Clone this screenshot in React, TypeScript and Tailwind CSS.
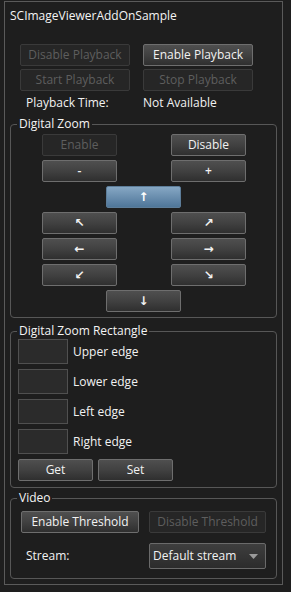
import React from "react"

const font = { fontFamily: '"Open Sans", "Liberation Sans", sans-serif' }

function Btn({
  children,
  w,
  disabled,
  blue,
  bold,
}: {
  children: React.ReactNode
  w: string
  disabled?: boolean
  blue?: boolean
  bold?: boolean
}) {
  let cls =
    "h-[22px] rounded-[2px] border flex items-center justify-center text-[12px] leading-none shrink-0 "
  if (disabled) cls += "border-[#3a3a3a] bg-[#262626] text-[#5e5e5e]"
  else if (blue)
    cls += "border-[#5d7d99] bg-gradient-to-b from-[#86a7c4] to-[#4f7699] text-white"
  else
    cls +=
      "border-[#6e6e6e] bg-gradient-to-b from-[#4f4f4f] via-[#414141] to-[#2f2f2f] text-[#f2f2f2]"
  return <div className={`${cls} ${w} ${bold ? "font-semibold" : ""}`}>{children}</div>
}

function Group({ title, children, className }: { title: string; children: React.ReactNode; className?: string }) {
  return (
    <fieldset
      className={`ml-[5px] w-[267px] rounded-[4px] border border-[#575757] ${className ?? ""}`}
    >
      <legend className="ml-[6px] px-[2px] text-[12px] leading-[16px] text-[#f4f4f4]">{title}</legend>
      {children}
    </fieldset>
  )
}

function Arrow({ c }: { c: string }) {
  return (
    <span className="text-[12px] font-bold leading-none" style={{ fontFamily: '"DejaVu Sans", sans-serif' }}>
      {c}
    </span>
  )
}

function EdgeRow({ label }: { label: string }) {
  return (
    <div className="flex items-center gap-[5px]">
      <div className="w-[50px] h-[25px] border border-[#505050] bg-[#2b2b2b]" />
      <span className="text-[12px] text-[#f2f2f2]">{label}</span>
    </div>
  )
}

export default function App() {
  return (
    <div className="w-[291px] h-[592px] bg-[#1e1e1e] pt-px pl-1" style={font}>
      <div className="w-[279px] h-[584px] border border-[#5a5a5a] flex flex-col">
        <div className="h-[28px] pl-[5px] flex items-center text-[12px] text-[#f4f4f4]">
          SCImageViewerAddOnSample
        </div>

        <div className="mt-[14px] ml-[15px] flex gap-[13px]">
          <Btn w="w-[110px]" disabled>Disable Playback</Btn>
          <Btn w="w-[110px]">Enable Playback</Btn>
        </div>
        <div className="mt-[3px] ml-[15px] flex gap-[13px]">
          <Btn w="w-[110px]" disabled>Start Playback</Btn>
          <Btn w="w-[110px]" disabled>Stop Playback</Btn>
        </div>
        <div className="mt-[2px] h-[20px] flex items-center text-[12px] text-[#f2f2f2]">
          <span className="ml-[21px] w-[117px]">Playback Time:</span>
          <span>Not Available</span>
        </div>

        <Group title="Digital Zoom" className="mt-[3px]">
          <div className="pt-[2px] pb-[5px] flex flex-col gap-[4px]">
            <div className="flex justify-between pl-[31px] pr-[30px]">
              <Btn w="w-[75px]" disabled>Enable</Btn>
              <Btn w="w-[75px]">Disable</Btn>
            </div>
            <div className="flex justify-between pl-[31px] pr-[30px]">
              <Btn w="w-[75px]" bold>-</Btn>
              <Btn w="w-[75px]" bold>+</Btn>
            </div>
            <div className="flex justify-center">
              <Btn w="w-[75px]" blue><Arrow c="↑" /></Btn>
            </div>
            <div className="flex justify-between pl-[31px] pr-[30px]">
              <Btn w="w-[75px]"><Arrow c="↖" /></Btn>
              <Btn w="w-[75px]"><Arrow c="↗" /></Btn>
            </div>
            <div className="flex justify-between pl-[31px] pr-[30px]">
              <Btn w="w-[75px]"><Arrow c="←" /></Btn>
              <Btn w="w-[75px]"><Arrow c="→" /></Btn>
            </div>
            <div className="flex justify-between pl-[31px] pr-[30px]">
              <Btn w="w-[75px]"><Arrow c="↙" /></Btn>
              <Btn w="w-[75px]"><Arrow c="↘" /></Btn>
            </div>
            <div className="flex justify-center">
              <Btn w="w-[75px]"><Arrow c="↓" /></Btn>
            </div>
          </div>
        </Group>

        <Group title="Digital Zoom Rectangle" className="mt-[5px]">
          <div className="pb-[6px] pl-[7px] flex flex-col gap-[5px]">
            <EdgeRow label="Upper edge" />
            <EdgeRow label="Lower edge" />
            <EdgeRow label="Left edge" />
            <EdgeRow label="Right edge" />
            <div className="flex gap-[5px]">
              <Btn w="w-[75px]">Get</Btn>
              <Btn w="w-[75px]">Set</Btn>
            </div>
          </div>
        </Group>

        <Group title="Video" className="mt-[2px]">
          <div className="pt-[5px] pb-[9px] pl-[10px]">
            <div className="flex gap-[10px]">
              <Btn w="w-[118px]">Enable Threshold</Btn>
              <Btn w="w-[117px]" disabled>Disable Threshold</Btn>
            </div>
            <div className="mt-[10px] flex items-center">
              <span className="ml-[5px] w-[123px] text-[12px] text-[#f2f2f2]">Stream:</span>
              <div className="w-[117px] h-[26px] rounded-[2px] border border-[#6a6a6a] bg-gradient-to-b from-[#3e3e3e] to-[#2c2c2c] flex items-center justify-between pl-[3px] pr-[7px] text-[12px] text-[#f2f2f2]">
                <span>Default stream</span>
                <svg width="9" height="5" viewBox="0 0 9 5">
                  <path d="M0 0 L9 0 L4.5 5 Z" fill="#9a9a9a" />
                </svg>
              </div>
            </div>
          </div>
        </Group>
      </div>
    </div>
  )
}
